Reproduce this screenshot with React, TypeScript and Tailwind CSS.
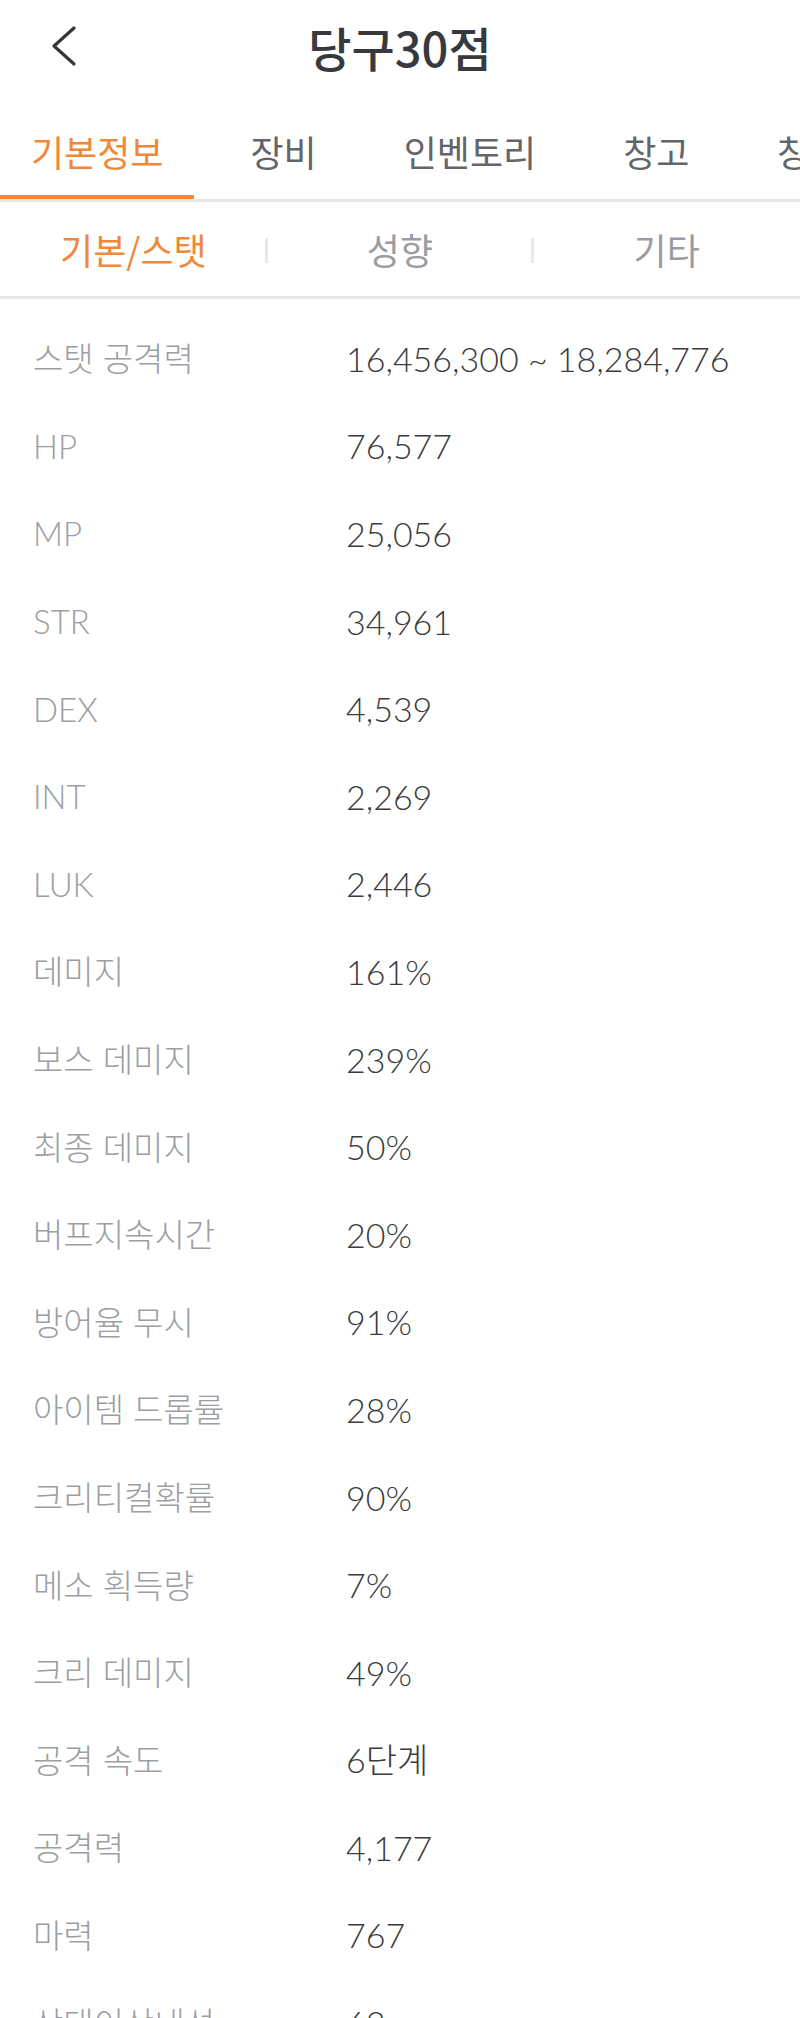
import React from "react";

const rows: [string, string][] = [
  ["스탯 공격력", "16,456,300 ~ 18,284,776"],
  ["HP", "76,577"],
  ["MP", "25,056"],
  ["STR", "34,961"],
  ["DEX", "4,539"],
  ["INT", "2,269"],
  ["LUK", "2,446"],
  ["데미지", "161%"],
  ["보스 데미지", "239%"],
  ["최종 데미지", "50%"],
  ["버프지속시간", "20%"],
  ["방어율 무시", "91%"],
  ["아이템 드롭률", "28%"],
  ["크리티컬확률", "90%"],
  ["메소 획득량", "7%"],
  ["크리 데미지", "49%"],
  ["공격 속도", "6단계"],
  ["공격력", "4,177"],
  ["마력", "767"],
  ["상태이상내성", "63"],
];

const tabs = ["기본정보", "장비", "인벤토리", "창고", "칭호"];

export default function App() {
  return (
    <div
      className="w-[800px] h-[2018px] overflow-hidden bg-white"
      style={{ fontFamily: '"Noto Sans CJK KR", "Noto Sans", sans-serif' }}
    >
      {/* header */}
      <div className="h-[92px] grid grid-cols-[1fr_auto_1fr] items-center">
        <div className="pl-[49px] flex items-center">
          <svg width="28" height="42" viewBox="0 0 28 42" fill="none">
            <path d="M25 3 L5 21 L25 39" stroke="#36373a" strokeWidth="3.2" strokeLinecap="round" strokeLinejoin="round" />
          </svg>
        </div>
        <div className="text-[47px] font-medium text-[#38393c] leading-none">당구30점</div>
        <div />
      </div>

      {/* main tabs */}
      <div className="relative border-b-[3px] border-[#e6e6e6] flex gap-[25px] whitespace-nowrap overflow-hidden">
        {tabs.map((t, i) => (
          <div key={t} className="relative shrink-0 h-[107px] px-[31px] pt-[10px] flex items-center">
            <span className={`text-[36px] leading-none ${i === 0 ? "text-[#f0883a]" : "text-[#636569]"}`}>{t}</span>
            {i === 0 && <div className="absolute left-0 right-0 bottom-[-3px] h-[7px] bg-[#f0883a]" />}
          </div>
        ))}
      </div>

      {/* sub tabs */}
      <div className="grid grid-cols-3 h-[97px] border-b-[3px] border-[#e6e6e6]">
        {["기본/스탯", "성향", "기타"].map((t, i) => (
          <div key={t} className="relative flex items-center justify-center">
            <span className={`text-[36px] leading-none ${i === 0 ? "text-[#f0883a]" : "text-[#9a9ca1]"}`}>{t}</span>
            {i < 2 && <div className="absolute right-[-1px] top-[36px] w-[3px] h-[25px] bg-[#e8e8e8]" />}
          </div>
        ))}
      </div>

      {/* rows */}
      <div className="pt-[16px]">
        {rows.map(([k, v]) => (
          <div key={k} className="h-[87.6px] flex items-center">
            <div className="w-[346px] pl-[33px] text-[33px] leading-none font-light text-[#9b9ea3]" style={{ fontFamily: 'Lato, "Noto Sans CJK KR", sans-serif' }}>{k}</div>
            <div className="text-[34px] leading-none font-light text-[#3a3b3e]" style={{ fontFamily: 'Lato, "Noto Sans CJK KR", sans-serif' }}>{v}</div>
          </div>
        ))}
      </div>
    </div>
  );
}
